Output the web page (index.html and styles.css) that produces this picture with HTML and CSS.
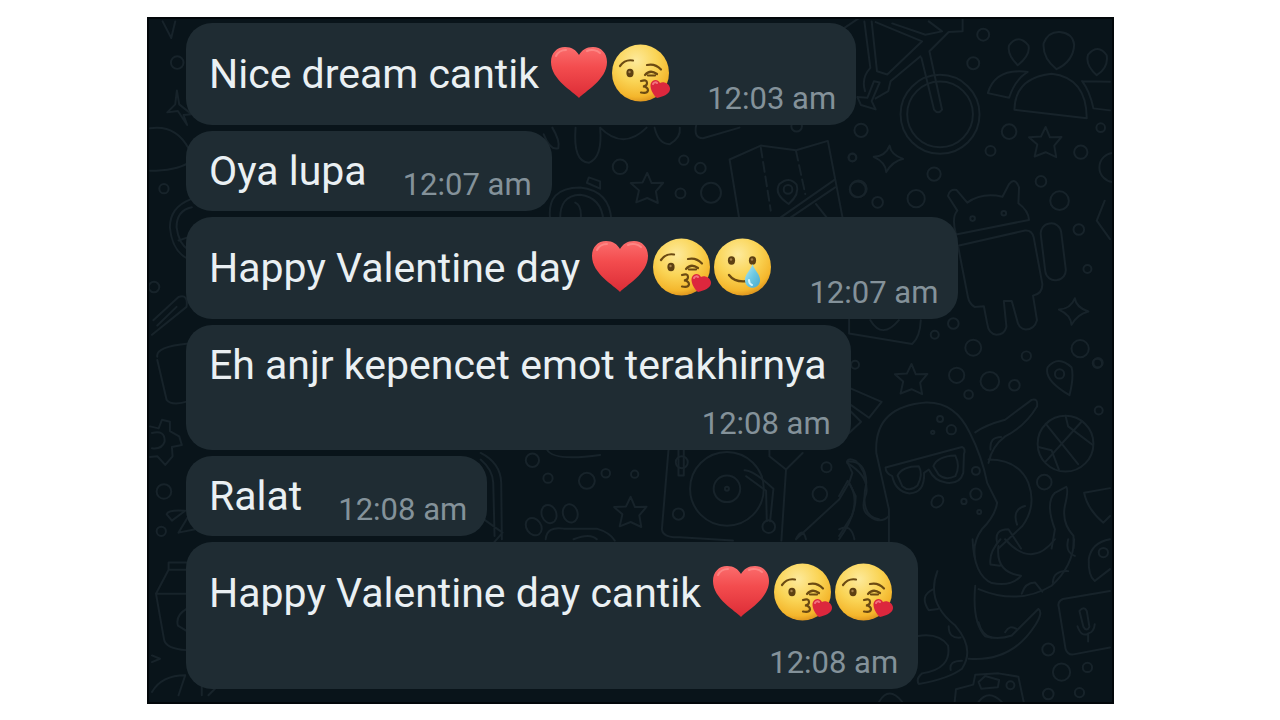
FILE: index.html
```html
<!DOCTYPE html>
<html lang="id">
<head>
    <meta charset="UTF-8">
    <meta name="viewport" content="width=device-width, initial-scale=1.0">
    <title>Chat</title>
    <link rel="stylesheet" href="styles.css">
</head>
<body>
    <svg class="defs" width="0" height="0" aria-hidden="true">
        <defs>
            <radialGradient id="skin" cx="42%" cy="28%" r="75%">
                <stop offset="0" stop-color="#fdea9c"/>
                <stop offset="0.5" stop-color="#fad455"/>
                <stop offset="0.85" stop-color="#f4b62c"/>
                <stop offset="1" stop-color="#d98f1c"/>
            </radialGradient>
            <linearGradient id="red" x1="0" y1="0" x2="0" y2="1">
                <stop offset="0" stop-color="#fb6d6d"/>
                <stop offset="0.4" stop-color="#f34c4e"/>
                <stop offset="1" stop-color="#dc2c36"/>
            </linearGradient>
            <linearGradient id="tear" x1="0" y1="0" x2="1" y2="1">
                <stop offset="0" stop-color="#b5ebf5"/>
                <stop offset="0.5" stop-color="#6ec9e2"/>
                <stop offset="1" stop-color="#4ba8cb"/>
            </linearGradient>
            <symbol id="heart" viewBox="0 0 61 60">
                <path d="M30 55C25 49 2 37 2 19C2 10 8 4 16 4C23 4 27 7 30 12C33 7 37 4 44 4C52 4 58 10 58 19C58 37 35 49 30 55Z" fill="url(#red)"/>
                <path d="M7 13C9 9 13 7 17 7M38 8C42 6 48 7 51 10" fill="none" stroke="#ff9b98" stroke-width="2" stroke-linecap="round" opacity=".6"/>
            </symbol>
            <symbol id="kiss" viewBox="0 0 61 60">
                <circle cx="30.500" cy="30" r="28.500" fill="url(#skin)"/>
                <g fill="none" stroke="#6b4a12" stroke-width="2.200" stroke-linecap="round">
                    <path d="M10 23Q15 16 23 17.500"/>
                    <path d="M37 22Q45 20 51 26.500"/>
                    <path d="M35 32Q40 26 47 31M38 32.500H45"/>
                    <path d="M31 38Q37 36 37 40Q37 43 33 43.500Q38 44 38 47.500Q37 51 31 49.500"/>
                </g>
                <ellipse cx="20" cy="30" rx="3.600" ry="4.200" fill="#5d4012"/>
                <circle cx="19.500" cy="29" r="1.200" fill="#a7824b"/>
                <path d="M47 55C43 52 39 44 41 40C43 36 48 36 50 40C53 38 59 40 60 45C61 51 52 54 47 55Z" fill="#dc273d"/>
                <path d="M43 41C44 39 46 39 47 40" fill="none" stroke="#f37480" stroke-width="2" stroke-linecap="round"/>
            </symbol>
            <symbol id="smile-tear" viewBox="0 0 61 60">
                <circle cx="30.500" cy="30" r="28.500" fill="url(#skin)"/>
                <ellipse cx="19.500" cy="23.500" rx="3.600" ry="4.200" fill="#5d4012"/>
                <ellipse cx="40.500" cy="23.500" rx="3.600" ry="4.200" fill="#5d4012"/>
                <circle cx="19" cy="22.500" r="1.200" fill="#a7824b"/>
                <circle cx="40" cy="22.500" r="1.200" fill="#a7824b"/>
                <path d="M17 38Q23 46 36 44" fill="none" stroke="#6b4a12" stroke-width="2.400" stroke-linecap="round"/>
                <path d="M40.500 27C42 33 49 38 48 44C47 53 34 53 33 44C32 38 39 33 40.500 27Z" fill="url(#tear)"/>
                <path d="M37 43Q37 47 40 48" fill="none" stroke="#d8f6fb" stroke-width="2" stroke-linecap="round"/>
            </symbol>
            <path id="star" d="M0 -46L13 -15L48 -16L26 10L32 45L0 30L-33 43L-25 7L-50 -15L-14 -17Z"/>
            <path id="spark" d="M4 -40Q8 -12 45 0Q12 8 -6 40Q-8 10 -44 -6Q-8 -8 4 -40Z"/>
        </defs>
    </svg>

    <main class="chat">
        <svg class="wallpaper" viewBox="0 0 2901 2061" preserveAspectRatio="xMidYMid slice" aria-hidden="true">
            <!-- bike, people -->
            <g transform="translate(2079 -21)">
                <circle cx="304" cy="310" r="119"/>
                <circle cx="304" cy="310" r="99"/>
                <path d="M248 140L286 296Q298 312 310 296L272 120L330 62L372 60V20M0 60L60 20M76 30L94 170Q66 200 78 240M98 30L114 180L145 190L250 90L110 32M160 36L260 70L310 60L270 30M245 135L155 210L148 240L110 262M105 210L85 260L55 258L66 282L110 295L98 270L122 214Z"/>
                <path d="M538 162Q505 130 512 102Q540 66 570 102Q578 130 538 162ZM655 174Q612 140 616 96Q630 60 665 62Q704 66 708 100Q706 150 655 174ZM776 192Q740 160 750 130Q780 95 806 132Q812 170 776 192Z"/>
                <path d="M528 296Q530 200 640 188Q745 200 746 322L528 296M448 246Q470 170 568 182Q530 205 512 260L448 246M732 210L816 212M732 210Q755 240 766 292L816 298"/>
                <circle cx="434" cy="70" r="18"/><circle cx="404" cy="156" r="18"/><circle cx="66" cy="358" r="20"/><circle cx="40" cy="440" r="11"/>
                <circle cx="512" cy="362" r="22"/><circle cx="456" cy="420" r="15"/><circle cx="286" cy="490" r="20"/><circle cx="58" cy="534" r="25"/>
                <circle cx="728" cy="424" r="20"/><circle cx="608" cy="512" r="16"/><circle cx="788" cy="350" r="13"/><circle cx="828" cy="470" r="44"/>
                <use href="#spark" x="148" y="444"/>
                <use href="#star" x="622" y="394"/>
            </g>
            <!-- robot, camera -->
            <g transform="translate(2079 489)">
                <path d="M352 162L572 118Q570 90 540 68L542 20Q530 -12 512 10L492 48Q430 34 386 66L354 28Q332 24 328 46L356 90Q338 110 352 162Z"/>
                <path d="M358 196L560 150Q580 148 586 170L612 310Q614 340 584 346L596 420Q588 448 562 448Q540 446 536 420L520 362H496L504 440Q498 464 474 464Q450 462 446 430L436 378L408 380Q392 370 388 350Z"/>
                <rect x="614" y="128" width="62" height="172" rx="30" transform="rotate(-7 645 214)"/>
                <circle cx="402" cy="114" r="7"/><circle cx="496" cy="98" r="7"/>
                <path d="M30 418V460L220 492Q244 470 246 420M94 420Q130 480 180 420M800 60L776 120L816 176"/>
                <circle cx="116" cy="65" r="16"/><circle cx="232" cy="54" r="26"/><circle cx="664" cy="60" r="28"/><circle cx="722" cy="147" r="16"/>
                <circle cx="748" cy="266" r="12"/><circle cx="344" cy="430" r="16"/><circle cx="288" cy="464" r="12"/><circle cx="404" cy="503" r="24"/>
                <circle cx="564" cy="528" r="14"/><circle cx="726" cy="506" r="26"/><circle cx="780" cy="548" r="14"/><circle cx="48" cy="554" r="12"/>
                <use href="#spark" x="706" y="394"/>
            </g>
            <!-- octopus with glasses, pin, ball -->
            <g transform="translate(2079 1029)">
                <use href="#star" x="218" y="58"/>
                <path d="M150 570V450L112 280Q104 140 262 128Q350 126 394 220Q430 290 446 370L476 430Q470 470 430 510Q400 550 410 600"/>
                <path d="M140 324L370 262Q382 266 376 284L374 340Q364 374 324 370Q288 366 270 330L256 340Q258 400 212 402Q170 396 160 350Q140 342 140 324Z"/>
                <path d="M176 348Q190 320 240 320Q254 344 236 378Q212 400 190 380ZM284 320Q296 290 350 288Q366 320 350 350Q320 364 300 346Z"/>
                <path d="M410 218Q440 196 500 180L580 120Q600 114 596 140Q560 200 500 230Q460 260 450 310M450 300Q540 300 570 370Q596 440 552 500L480 568M476 550Q466 510 510 510L548 568M560 440Q520 450 536 496M456 270Q452 232 488 232"/>
                <path d="M150 470Q120 500 80 460Q66 440 82 400Q90 350 24 310Q24 292 50 304Q80 330 82 380M0 410L26 364Q60 410 38 470L0 530M36 86L128 126L90 174L36 136M30 150L66 186L30 220"/>
                <path d="M694 106Q616 60 628 22Q660 -16 700 22Q708 50 694 106ZM738 400L816 386M738 400Q748 450 796 490L816 470M640 568L650 510Q620 430 650 400L684 382Q692 390 680 440Q670 490 706 530V568"/>
                <circle cx="682" cy="252" r="84"/>
                <path d="M622 192L720 314M682 168L690 200L764 256M730 186L622 306M600 262L640 272L662 330"/>
                <circle cx="664" cy="42" r="14"/><circle cx="354" cy="46" r="23"/><circle cx="454" cy="64" r="28"/><circle cx="528" cy="76" r="16"/><circle cx="390" cy="104" r="13"/>
                <circle cx="778" cy="10" r="14"/><circle cx="782" cy="152" r="12"/><circle cx="618" cy="368" r="22"/><circle cx="338" cy="210" r="14"/><circle cx="304" cy="178" r="9"/>
                <circle cx="282" cy="218" r="5"/><circle cx="412" cy="334" r="12"/><circle cx="412" cy="404" r="17"/><circle cx="376" cy="426" r="8"/><circle cx="422" cy="458" r="6"/>
                <ellipse cx="296" cy="426" rx="20" ry="16" transform="rotate(-45 296 426)"/>
            </g>
            <!-- tentacles, microphone -->
            <g transform="translate(2079 1569)">
                <path d="M402 0Q406 110 460 132Q520 144 548 110M500 0Q580 90 650 0M708 0Q706 80 640 140Q540 200 420 150M480 20Q470 100 548 110M486 0Q450 40 456 76L484 80M410 140Q400 250 440 292Q480 304 520 290L600 210Q616 220 590 260Q520 370 390 360"/>
                <path d="M550 164Q560 130 590 130L612 158M644 132Q644 94 690 96M690 0Q680 40 710 50M420 250Q430 290 460 296M500 280Q514 256 534 270M296 96Q260 190 350 260Q410 330 370 390Q330 420 240 436Q230 420 250 404Q340 390 328 320Q300 280 234 292M284 150Q240 170 270 214L298 210M330 262Q330 300 366 296M336 394Q330 366 370 366"/>
                <path d="M816 156L674 180Q656 188 662 206L682 330Q690 352 710 346L816 326M724 216Q738 200 746 216L754 264Q746 280 736 264ZM718 262Q730 296 750 284Q768 280 770 256M750 286V308M816 0Q760 10 752 60Q750 110 770 126L816 90"/>
                <path d="M348 490L352 452L404 438L410 408L480 404L540 414L556 490M420 430L440 412L482 424L478 446L428 450ZM420 490Q450 450 490 490M120 490Q150 440 190 490"/>
                <circle cx="630" cy="332" r="18"/><circle cx="670" cy="400" r="26"/><circle cx="748" cy="386" r="14"/><circle cx="630" cy="466" r="16"/><circle cx="724" cy="462" r="14"/><circle cx="516" cy="440" r="12"/><circle cx="796" cy="40" r="14"/>
            </g>
            <!-- watch, map -->
            <g transform="translate(1179 309)">
                <path d="M10 40Q30 90 54 82Q60 60 36 20M106 20Q98 124 146 126Q188 110 180 20M180 20Q250 90 320 20M344 20Q356 70 390 70Q424 50 420 20M470 10Q460 52 490 52L600 20M146 170L180 182V204L140 186Z"/>
                <path d="M30 300Q16 200 120 200Q210 210 214 300M60 300Q56 224 120 222Q184 230 190 300M105 246Q124 254 122 290M600 300L570 116L664 74L770 88L866 60L912 300"/>
                <path d="M664 80L694 270M770 90L798 220" stroke-dasharray="30 14"/>
                <path d="M748 250Q702 220 720 190Q750 164 772 192Q782 220 748 250ZM710 300L888 176M740 300L888 200M830 250L870 300"/>
                <circle cx="746" cy="206" r="13"/><circle cx="240" cy="138" r="22"/><circle cx="432" cy="118" r="14"/><circle cx="482" cy="142" r="16"/><circle cx="422" cy="218" r="15"/><circle cx="514" cy="216" r="30"/><circle cx="940" cy="110" r="12"/><circle cx="956" cy="206" r="24"/><circle cx="772" cy="16" r="16"/>
                <use href="#star" x="322" y="202"/>
            </g>
            <!-- paw, record player -->
            <g transform="translate(999 1269)">
                <path d="M0 40Q60 70 62 130L64 300M0 60Q36 90 38 130L42 290M10 240L66 280L40 310M200 30Q220 66 360 46M196 300Q200 260 250 268H350Q390 280 404 304M280 300Q330 280 350 300"/>
                <ellipse cx="160" cy="262" rx="22" ry="28" transform="rotate(-35 160 262)"/>
                <ellipse cx="206" cy="224" rx="22" ry="28" transform="rotate(-20 206 224)"/>
                <ellipse cx="270" cy="222" rx="22" ry="28" transform="rotate(-15 270 222)"/>
                <path d="M566 30L546 270Q550 296 600 294L760 304M906 304L920 90L870 50V30M920 90L970 40M596 30V108H612V30M795 92Q820 90 882 148L872 246M800 110L860 154L862 246M950 300L1080 180L1110 130L1130 170Q1130 230 1080 300M1104 66Q1160 60 1162 130Q1140 230 1200 240M1104 66L1120 100L1110 130M950 300Q970 260 980 300M1080 270Q1116 250 1126 300"/>
                <circle cx="742" cy="148" r="111"/><circle cx="742" cy="148" r="40"/><circle cx="742" cy="148" r="6"/>
                <circle cx="606" cy="68" r="18"/><circle cx="596" cy="224" r="17"/><circle cx="868" cy="262" r="19"/><circle cx="156" cy="62" r="20"/><circle cx="203" cy="116" r="14"/><circle cx="320" cy="124" r="24"/><circle cx="377" cy="101" r="13"/><circle cx="464" cy="104" r="11"/><circle cx="1042" cy="83" r="15"/><circle cx="1022" cy="164" r="22"/>
                <use href="#star" x="452" y="218"/>
            </g>
            <!-- left edge, upper half -->
            <g transform="translate(-21 -21)">
                <path d="M62 30L88 80L100 30M105 238L112 280L150 310L125 312L136 342L108 300L76 304L100 280ZM24 352Q100 340 140 412M24 480Q100 480 140 456M146 566Q84 590 84 650Q90 720 136 744M150 590Q104 600 104 650Q110 700 140 718M110 690L140 680M34 930L110 860Q140 850 134 890L30 974M46 946L104 890M46 1040Q40 1010 140 1000"/>
                <circle cx="106" cy="154" r="19"/><circle cx="66" cy="534" r="14"/><circle cx="36" cy="830" r="16"/>
            </g>
            <!-- left edge, lower half -->
            <g transform="translate(-21 1029)">
                <path d="M46 0L74 120Q90 140 140 124M24 200L50 206L60 180L84 186V214L112 230L120 256L90 262L92 290L70 316L46 290L24 292M30 220Q70 210 68 246Q60 270 30 266M74 464Q80 450 130 454L90 484ZM110 520L140 470M110 520L160 510M134 610H80V632H134M80 632L42 704H136M42 704L66 840Q70 870 134 874M134 750Q100 770 108 800L134 816M30 890L54 900L30 910M30 1000Q60 950 130 950M130 950L110 1010M180 960V1010M240 970L200 1010"/>
                <circle cx="66" cy="396" r="22"/><circle cx="58" cy="516" r="14"/>
            </g>
        </svg>

        <article class="bubble">
            <p class="text text-emoji">Nice dream cantik <svg class="emoji" role="img" aria-label="❤️"><use href="#heart"/></svg><svg class="emoji" role="img" aria-label="😘"><use href="#kiss"/></svg></p>
            <time class="time" datetime="00:03">12:03 am</time>
        </article>
        <article class="bubble">
            <p class="text">Oya lupa</p>
            <time class="time" datetime="00:07">12:07 am</time>
        </article>
        <article class="bubble">
            <p class="text text-emoji">Happy Valentine day <svg class="emoji" role="img" aria-label="❤️"><use href="#heart"/></svg><svg class="emoji" role="img" aria-label="😘"><use href="#kiss"/></svg><svg class="emoji" role="img" aria-label="🥲"><use href="#smile-tear"/></svg></p>
            <time class="time" datetime="00:07">12:07 am</time>
        </article>
        <article class="bubble stacked">
            <p class="text">Eh anjr kepencet emot terakhirnya</p>
            <time class="time" datetime="00:08">12:08 am</time>
        </article>
        <article class="bubble">
            <p class="text">Ralat</p>
            <time class="time" datetime="00:08">12:08 am</time>
        </article>
        <article class="bubble stacked">
            <p class="text text-emoji">Happy Valentine day cantik <svg class="emoji" role="img" aria-label="❤️"><use href="#heart"/></svg><svg class="emoji" role="img" aria-label="😘"><use href="#kiss"/></svg><svg class="emoji" role="img" aria-label="😘"><use href="#kiss"/></svg></p>
            <time class="time" datetime="00:08">12:08 am</time>
        </article>
    </main>
</body>
</html>
```
FILE: styles.css
```css
body {
    margin: 0;
    padding: 17px 166px 16px 147px;
    background: #fff;
    font-family: Roboto, "Liberation Sans", sans-serif;
}
.defs {
    position: absolute;
}
.chat {
    position: relative;
    display: flex;
    flex-direction: column;
    align-items: flex-start;
    gap: 6px;
    padding: 4px 20px 13px 37px;
    border: 2px solid #02070a;
    background: #09141a;
    overflow: hidden;
}
.wallpaper {
    position: absolute;
    inset: 0;
    width: 100%;
    height: 100%;
    fill: none;
    stroke: #17232a;
    stroke-width: 6;
    stroke-linejoin: round;
    stroke-linecap: round;
}
.bubble {
    position: relative;
    display: flex;
    align-items: flex-end;
    gap: 36px;
    padding: 15px 20px 8px 23px;
    border-radius: 26px;
    background: #1f2c33;
}
.stacked {
    flex-direction: column;
    gap: 9px;
}
.text {
    margin: 0;
    padding-bottom: 7px;
    color: #eaf0f3;
    font-size: 41px;
    line-height: 50px;
}
.text-emoji {
    line-height: 72px;
}
.stacked .text {
    padding-right: 4px;
}
.emoji {
    width: 61px;
    height: 60px;
    vertical-align: -15px;
}
.time {
    color: #84929a;
    font-size: 31px;
    line-height: 36px;
    white-space: nowrap;
}
```
